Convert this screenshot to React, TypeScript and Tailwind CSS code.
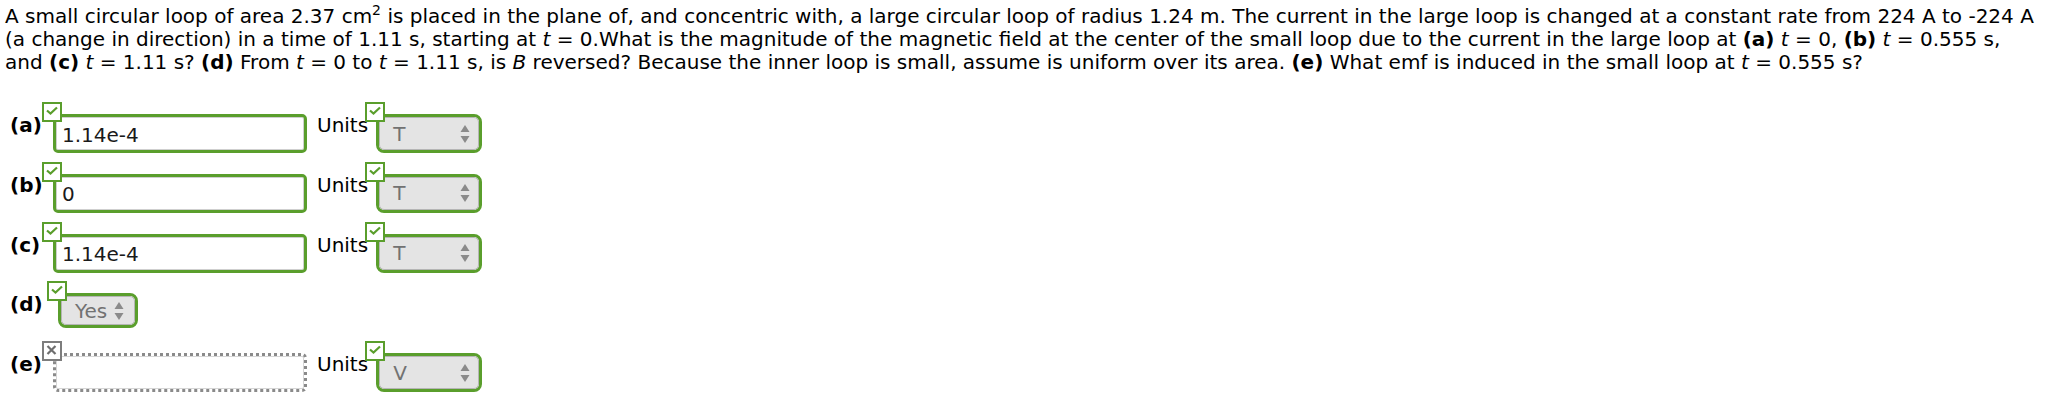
const GREEN = "border-[#5a9e2c]";

function Check() {
  return (
    <span className="absolute -left-[11px] -top-[12px] z-10 flex h-5 w-5 items-start justify-center border-2 border-[#5a9e2c] bg-white">
      <svg width="16" height="12" viewBox="0 0 16 12" className="mt-[1px]">
        <path d="M3 5.5 L6.5 8.5 L13 2.5" fill="none" stroke="#5a9e2c" strokeWidth="2.2" />
      </svg>
    </span>
  );
}

function Cross() {
  return (
    <span className="absolute -left-[11px] -top-[12px] z-10 flex h-5 w-5 items-start justify-center border-2 border-[#7d7d7d] bg-white">
      <svg width="16" height="14" viewBox="0 0 16 14" className="mt-[1px]">
        <path d="M3.5 2 L11.5 10 M11.5 2 L3.5 10" fill="none" stroke="#6e6e6e" strokeWidth="2.2" />
      </svg>
    </span>
  );
}

function Arrows() {
  return (
    <svg width="10" height="20" viewBox="0 0 10 20" className="shrink-0">
      <path d="M5 1 L9.5 8 L0.5 8 Z" fill="#8a8a8a" />
      <path d="M5 19 L9.5 12 L0.5 12 Z" fill="#8a8a8a" />
    </svg>
  );
}

function TextField({ value, wrong }: { value: string; wrong?: boolean }) {
  return (
    <div className="relative">
      {wrong ? <Cross /> : <Check />}
      <div
        className={
          wrong
            ? "flex h-[39px] w-[254px] items-center rounded-[5px] border-[3px] border-dotted border-[#8a8a8a] bg-white px-[6px] shadow-[inset_0_0_0_1px_#d6d6d6]"
            : `flex h-[39px] w-[254px] items-center rounded-[5px] border-[3px] ${GREEN} bg-white px-[6px] shadow-[inset_0_0_0_1px_#cfcfcf]`
        }
      >
        <span className="pt-[2px] text-[20px] leading-none text-[#1a1a1a]">{value}</span>
      </div>
    </div>
  );
}

function SelectBox({ value, wide }: { value: string; wide?: boolean }) {
  return (
    <div className="relative">
      <Check />
      <div
        className={`rounded-[8px] border-[3px] ${GREEN} bg-white ${
          wide ? "h-[39px] w-[106px]" : "h-[35px] w-[80px]"
        }`}
      >
        <div
          className={`flex h-full items-center rounded-[5px] border border-[#b5b5b5] bg-[#e4e4e4] ${
            wide ? "justify-between pl-[13px] pr-[8px]" : "gap-[7px] pl-[13px]"
          }`}
        >
          <span className="text-[20px] leading-none text-[#727272]">{value}</span>
          <Arrows />
        </div>
      </div>
    </div>
  );
}

function Label({ children }: { children: string }) {
  return <span className="w-[53px] shrink-0 pl-[10px] font-bold leading-[23px]">{children}</span>;
}

function Units() {
  return <span className="ml-[10px] mr-[8px] leading-[23px]">Units</span>;
}

export default function App() {
  return (
    <div className="min-h-[405px] bg-white pt-[5px] pl-[5px] text-[20px] text-black [font-family:'DejaVu_Sans',Verdana,sans-serif]">
      <p className="whitespace-nowrap leading-[23px]">
        A small circular loop of area 2.37 cm
        <span className="relative -top-[8px] text-[14px] leading-none">2</span> is placed in the plane of, and
        concentric with, a large circular loop of radius 1.24 m. The current in the large loop is changed at a
        constant rate from 224 A to -224 A
        <br />
        (a change in direction) in a time of 1.11 s, starting at <i>t</i> = 0.What is the magnitude of the magnetic
        field at the center of the small loop due to the current in the large loop at <b>(a)</b> <i>t</i> = 0,{" "}
        <b>(b)</b> <i>t</i> = 0.555 s,
        <br />
        and <b>(c)</b> <i>t</i> = 1.11 s? <b>(d)</b> From <i>t</i> = 0 to <i>t</i> = 1.11 s, is <i>B</i> reversed?
        Because the inner loop is small, assume is uniform over its area. <b>(e)</b> What emf is induced in the small
        loop at <i>t</i> = 0.555 s?
      </p>

      <div className="mt-[40px] flex flex-col gap-[20.75px] -ml-[5px]">
        <div className="flex h-[39px] items-start">
          <Label>(a)</Label>
          <TextField value="1.14e-4" />
          <Units />
          <SelectBox value="T" wide />
        </div>
        <div className="flex h-[39px] items-start">
          <Label>(b)</Label>
          <TextField value="0" />
          <Units />
          <SelectBox value="T" wide />
        </div>
        <div className="flex h-[39px] items-start">
          <Label>(c)</Label>
          <TextField value="1.14e-4" />
          <Units />
          <SelectBox value="T" wide />
        </div>
        <div className="flex h-[39px] items-start">
          <Label>(d)</Label>
          <div className="ml-[5px]">
            <SelectBox value="Yes" />
          </div>
        </div>
        <div className="flex h-[39px] items-start">
          <Label>(e)</Label>
          <TextField value="" wrong />
          <Units />
          <SelectBox value="V" wide />
        </div>
      </div>
    </div>
  );
}
